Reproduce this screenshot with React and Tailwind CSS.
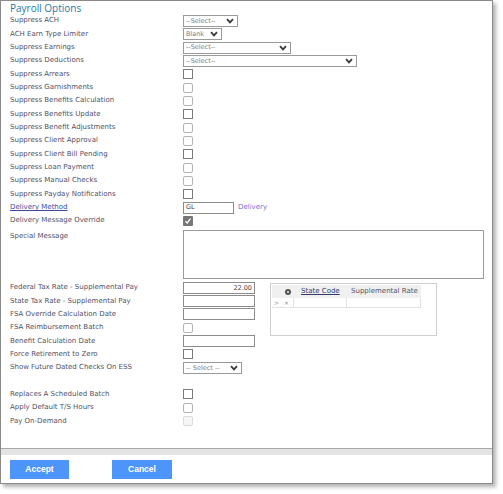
import React from 'react';

const font = { fontFamily: '"DejaVu Sans", Verdana, sans-serif' };

// ── Small controls ─────────────────────────────────────────────────────────────

function Chevron() {
  return (
    <svg width="8" height="6" viewBox="0 0 8 6" className="shrink-0">
      <path d="M1 1.2 L4 4.4 L7 1.2" fill="none" stroke="#3a3a3a" strokeWidth="1.8" />
    </svg>
  );
}

function Select({ text, w }) {
  return (
    <div className={`${w} h-[12px] border border-[#9a9a9a] flex items-center justify-between pl-[2px] pr-[3px] bg-white`}>
      <span className="text-[6.5px] text-[#7a7a8a] leading-none">{text}</span>
      <Chevron />
    </div>
  );
}

function Check({ tone = 'dark', checked = false }) {
  if (checked) {
    return (
      <div className="w-[10px] h-[10px] rounded-[1px] bg-[#777] flex items-center justify-center">
        <svg width="8" height="8" viewBox="0 0 8 8">
          <path d="M1.5 4.3 L3.2 6 L6.5 1.6" fill="none" stroke="#fff" strokeWidth="1.3" />
        </svg>
      </div>
    );
  }
  const cls = tone === 'dark'
    ? 'border-[#7c7c7c]'
    : tone === 'light'
      ? 'border-[#b5b5b5] rounded-[2px]'
      : 'border-[#dcdcdc] bg-[#f6f6f6] rounded-[2px]';
  return <div className={`w-[10px] h-[10px] border ${cls}`} />;
}

function Input({ w = 'w-[72px]', value, right }) {
  return (
    <div className={`${w} h-[12px] border border-[#8c8c8c] flex items-center px-[2px] ${right ? 'justify-end' : ''}`}>
      {value && <span className="text-[6.5px] text-[#444] leading-none">{value}</span>}
    </div>
  );
}

function Row({ label, children, link }) {
  return (
    <div className="h-[13.33px] flex items-center">
      <div className="w-[173px] shrink-0 flex items-center">
        {link
          ? <span className="text-[7px] text-[#3b4aa0] underline leading-none">{label}</span>
          : <span className="text-[7px] text-[#505066] leading-none">{label}</span>}
      </div>
      {children}
    </div>
  );
}

// ── Rate grid ──────────────────────────────────────────────────────────────────

function RateGrid() {
  return (
    <div className="w-[167px] h-[53px] mt-[2px] border border-[#cfcfcf] bg-white pt-[1px] pl-[1px]">
      <div className="w-[149px] h-[13px] bg-[#f0f0f0] flex items-center">
        <div className="w-[21px] flex justify-end pr-[2px]">
          <div className="w-[6px] h-[6px] rounded-full bg-[#555] flex items-center justify-center">
            <div className="w-[2px] h-[2px] rounded-full bg-[#f0f0f0]" />
          </div>
        </div>
        <div className="w-[54px] pl-[8px]">
          <span className="text-[7px] text-[#333a6a] underline leading-none">State Code</span>
        </div>
        <div className="flex-1 pl-[4px]">
          <span className="text-[7px] text-[#555566] leading-none">Supplemental Rate</span>
        </div>
      </div>
      <div className="w-[149px] h-[10px] flex items-center border-b border-[#e2e2e2]">
        <div className="w-[21px] flex items-center gap-[5px] pl-[2px] text-[6px] text-[#888] leading-none">
          <span>&gt;</span>
          <span>×</span>
        </div>
        <div className="w-[54px] h-full border-l border-r border-[#e2e2e2]" />
        <div className="flex-1 h-full border-r border-[#e2e2e2]" />
      </div>
    </div>
  );
}

// ── Page ───────────────────────────────────────────────────────────────────────

export default function App() {
  const dark = 'dark';
  const light = 'light';

  return (
    <div className="w-[503px] h-[494px] bg-white relative text-[7px] leading-none" style={font}>
      <div className="w-[493px] h-[484px] border border-[#8a8a8a] bg-white flex flex-col shadow-[3px_3px_4px_rgba(0,0,0,0.3)]">
        <div className="flex-1 pl-[9px]">
          <div className="h-[13.33px] flex items-center">
            <span className="text-[10px] text-[#1f78a8] leading-none" style={{ fontFamily: '"Open Sans", sans-serif' }}>
              Payroll Options
            </span>
          </div>

          <Row label="Suppress ACH"><Select text="--Select--" w="w-[55px]" /></Row>
          <Row label="ACH Earn Type Limiter"><Select text="Blank" w="w-[39px]" /></Row>
          <Row label="Suppress Earnings"><Select text="--Select--" w="w-[108px]" /></Row>
          <Row label="Suppress Deductions"><Select text="--Select--" w="w-[174px]" /></Row>
          <Row label="Suppress Arrears"><Check tone={dark} /></Row>
          <Row label="Suppress Garnishments"><Check tone={light} /></Row>
          <Row label="Suppress Benefits Calculation"><Check tone={light} /></Row>
          <Row label="Suppress Benefits Update"><Check tone={dark} /></Row>
          <Row label="Suppress Benefit Adjustments"><Check tone={light} /></Row>
          <Row label="Suppress Client Approval"><Check tone={light} /></Row>
          <Row label="Suppress Client Bill Pending"><Check tone={dark} /></Row>
          <Row label="Suppress Loan Payment"><Check tone={light} /></Row>
          <Row label="Suppress Manual Checks"><Check tone={light} /></Row>
          <Row label="Suppress Payday Notifications"><Check tone={dark} /></Row>
          <Row label="Delivery Method" link>
            <Input w="w-[51px]" value="GL" />
            <span className="ml-[4px] text-[7px] text-[#6f6fd8] leading-none">Delivery</span>
          </Row>
          <Row label="Delivery Message Override"><Check checked /></Row>

          <div className="h-[53.6px] flex items-start">
            <div className="w-[173px] shrink-0 pt-[5px]">
              <span className="text-[7px] text-[#505066] leading-none">Special Message</span>
            </div>
            <div className="w-[301px] h-[49px] mt-[2px] border border-[#9a9a9a]" />
          </div>

          <div className="flex items-start">
            <div className="w-[260px]">
              <Row label="Federal Tax Rate - Supplemental Pay"><Input value="22.00" right /></Row>
              <Row label="State Tax Rate - Supplemental Pay"><Input /></Row>
              <Row label="FSA Override Calculation Date"><Input /></Row>
              <Row label="FSA Reimbursement Batch"><Check tone={light} /></Row>
              <Row label="Benefit Calculation Date"><Input /></Row>
              <Row label="Force Retirement to Zero"><Check tone={dark} /></Row>
              <Row label="Show Future Dated Checks On ESS"><Select text="-- Select --" w="w-[59px]" /></Row>
            </div>
            <RateGrid />
          </div>

          <div className="h-[13.33px]" />
          <Row label="Replaces A Scheduled Batch"><Check tone={dark} /></Row>
          <Row label="Apply Default T/S Hours"><Check tone={light} /></Row>
          <Row label="Pay On-Demand"><Check tone="off" /></Row>
        </div>

        <div className="h-[7px] border-t border-[#a8a8a8] bg-[#e4e4e4]" />
        <div className="h-[28px] flex items-center pl-[9px] gap-[43px]" style={{ fontFamily: '"Liberation Sans", Arial, sans-serif' }}>
          <button className="w-[59px] h-[19px] bg-[#4d94fb] text-white text-[8.5px] font-bold">Accept</button>
          <button className="w-[60px] h-[19px] bg-[#4d94fb] text-white text-[8.5px] font-bold">Cancel</button>
        </div>
      </div>
    </div>
  );
}
